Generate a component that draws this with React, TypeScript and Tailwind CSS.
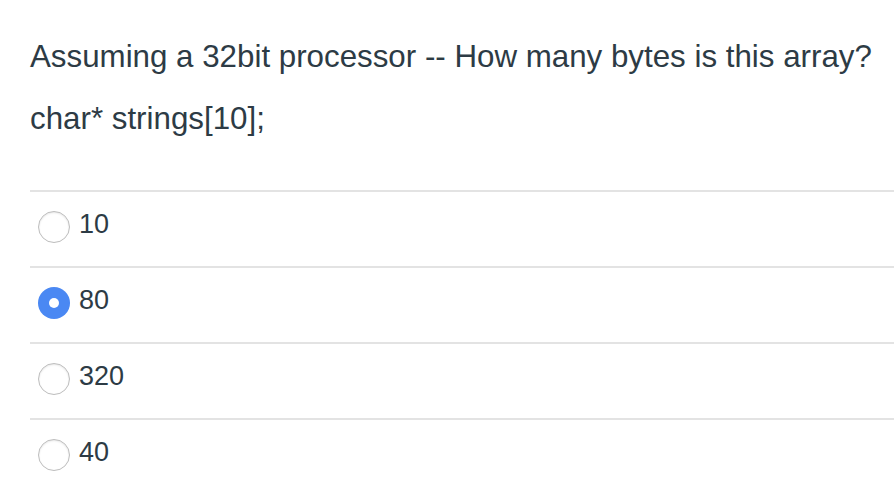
import React, { useState } from "react";

const options = ["10", "80", "320", "40"];

function Radio({ checked }: { checked: boolean }) {
  if (checked) {
    return (
      <span className="mt-[5px] flex h-[32px] w-[32px] shrink-0 items-center justify-center rounded-full bg-[#4a88f3]">
        <span className="h-[10px] w-[10px] rounded-full bg-white" />
      </span>
    );
  }
  return (
    <span className="mt-[5px] h-[32px] w-[32px] shrink-0 rounded-full border border-[#bdbdbd] bg-white shadow-[inset_0_1px_2px_rgba(0,0,0,0.1)]" />
  );
}

export default function App() {
  const [sel, setSel] = useState(1);
  return (
    <div className="h-[490px] w-[894px] overflow-hidden bg-white pl-[30px] text-[#2d3b45] font-['Liberation_Sans',Arial,sans-serif]">
      <div className="pt-[37px] text-[31.3px] leading-[40px]">Assuming a 32bit processor -- How many bytes is this array?</div>
      <div className="mt-[22px] text-[31.3px] leading-[40px]">char* strings[10];</div>
      <div className="mt-[51px]">
        {options.map((o, i) => (
          <div
            key={o}
            onClick={() => setSel(i)}
            className="flex h-[76px] items-center gap-[9px] border-t-2 border-[#e3e3e3] pb-[10px] pl-[8px] text-[27px]"
          >
            <Radio checked={sel === i} />
            <span>{o}</span>
          </div>
        ))}
      </div>
    </div>
  );
}
